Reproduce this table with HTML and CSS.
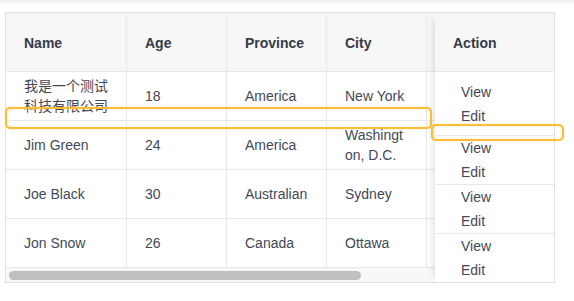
FILE: index.html
```html
<!DOCTYPE html>
<html lang="en">
<head>
<meta charset="utf-8">
<title>Table</title>
<link rel="stylesheet" href="styles.css">
</head>
<body>
<div class="page">
  <div class="topbar"></div>
  <div class="table">
    <div class="main">
      <div class="row head">
        <div class="cell">Name</div>
        <div class="cell">Age</div>
        <div class="cell">Province</div>
        <div class="cell">City</div>
        <div class="cell"></div>
      </div>
      <div class="row">
        <div class="cell wrap">我是一个测试科技有限公司</div>
        <div class="cell">18</div>
        <div class="cell">America</div>
        <div class="cell">New York</div>
        <div class="cell"></div>
      </div>
      <div class="row">
        <div class="cell">Jim Green</div>
        <div class="cell">24</div>
        <div class="cell">America</div>
        <div class="cell wrap">Washington, D.C.</div>
        <div class="cell"></div>
      </div>
      <div class="row">
        <div class="cell">Joe Black</div>
        <div class="cell">30</div>
        <div class="cell">Australian</div>
        <div class="cell">Sydney</div>
        <div class="cell"></div>
      </div>
      <div class="row">
        <div class="cell">Jon Snow</div>
        <div class="cell">26</div>
        <div class="cell">Canada</div>
        <div class="cell">Ottawa</div>
        <div class="cell"></div>
      </div>
      <div class="scroll"><div class="thumb"></div></div>
    </div>
    <div class="fixed">
      <div class="fhead">Action</div>
      <div class="frow first"><span class="act">View</span><span class="act">Edit</span></div>
      <div class="frow"><span class="act">View</span><span class="act">Edit</span></div>
      <div class="frow"><span class="act">View</span><span class="act">Edit</span></div>
      <div class="frow last"><span class="act">View</span><span class="act">Edit</span></div>
    </div>
  </div>
  <div class="mark mark-main"></div>
  <div class="mark mark-fixed"></div>
</div>
</body>
</html>
```

FILE: styles.css
```css
* { box-sizing: border-box; }

body {
  margin: 0;
  background: #ffffff;
  font-family: "Liberation Sans", "Noto Sans CJK SC", Arial, sans-serif;
  font-size: 14px;
  color: #434857;
}

.page {
  position: relative;
  width: 574px;
  height: 301px;
}

.topbar {
  height: 5px;
  background: linear-gradient(#efeff1, #ffffff);
}

.table {
  position: relative;
  margin: 7px 0 0 5px;
  width: 550px;
  height: 271px;
  border: 1px solid #dedee3;
  overflow: hidden;
}

.main {
  display: flex;
  flex-direction: column;
}

.row {
  display: grid;
  grid-template-columns: 121px 100px 100px 100px 120px;
  height: 49px;
  border-bottom: 1px solid #e8e8ec;
}

.row.head {
  height: 59px;
  padding-top: 1px;
  background: #f7f7f8;
  font-weight: bold;
  color: #363b47;
}

.cell {
  display: flex;
  align-items: center;
  padding: 0 18px;
  border-right: 1px solid #e8e8ec;
  line-height: 20px;
}

.cell.wrap {
  word-break: break-all;
}

.scroll {
  position: relative;
  height: 14px;
  background: #f8f8f9;
}

.thumb {
  position: absolute;
  left: 3px;
  top: 3px;
  width: 352px;
  height: 9px;
  border-radius: 5px;
  background: #bfbfc1;
}

.fixed {
  position: absolute;
  top: 0;
  right: 0;
  bottom: 0;
  width: 119px;
  background: #ffffff;
  box-shadow: -7px 0 8px -6px rgba(0, 0, 0, 0.14);
  display: flex;
  flex-direction: column;
}

.fhead {
  height: 59px;
  display: flex;
  align-items: center;
  padding-left: 18px;
  padding-top: 1px;
  background: #f7f7f8;
  border-bottom: 1px solid #e8e8ec;
  font-weight: bold;
  color: #363b47;
}

.frow {
  height: 49px;
  display: flex;
  flex-direction: column;
  justify-content: center;
  padding-left: 26px;
  border-bottom: 1px solid #e8e8ec;
}

.frow.first {
  height: 64px;
}

.frow.last {
  height: 48px;
  border-bottom: none;
}

.act {
  line-height: 24px;
}

.mark {
  position: absolute;
  border: 2px solid #fbbd35;
  border-radius: 5px;
  box-shadow: 0 0 1px rgba(251, 189, 53, 0.9), inset 0 0 1px rgba(251, 189, 53, 0.9);
}

.mark-main {
  left: 5px;
  top: 107px;
  width: 427px;
  height: 22px;
}

.mark-fixed {
  left: 431px;
  top: 124px;
  width: 133px;
  height: 17px;
}
```
